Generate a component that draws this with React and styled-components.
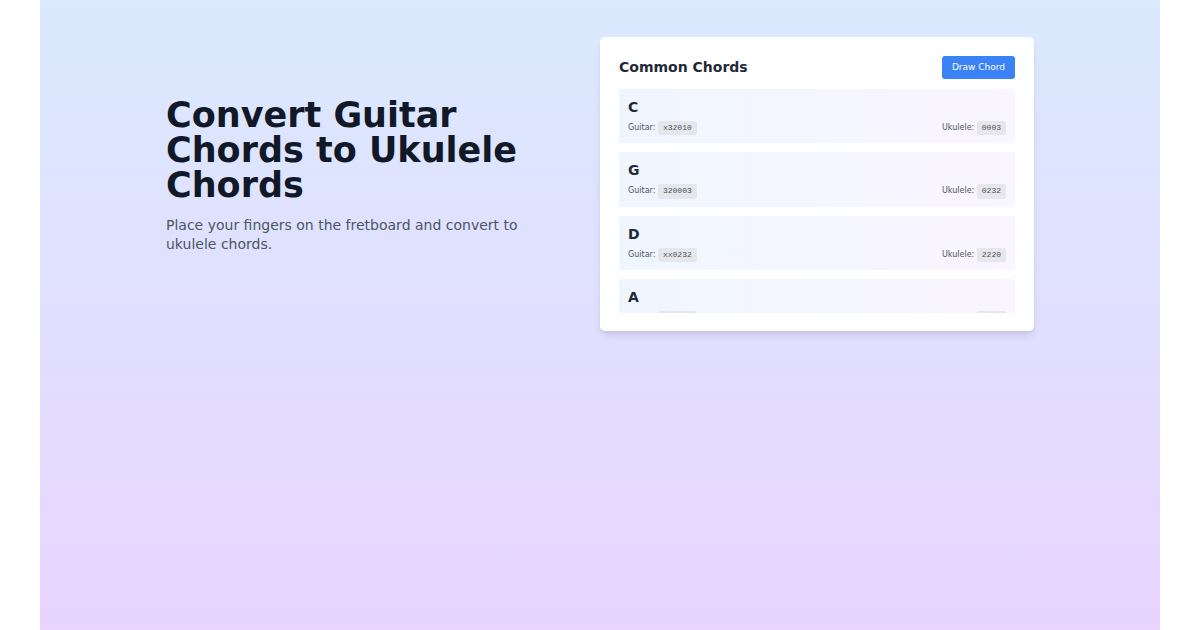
import React from "react";
import styled, { createGlobalStyle } from "styled-components";

const chords = [
  { name: "C", guitar: "x32010", ukulele: "0003" },
  { name: "G", guitar: "320003", ukulele: "0232" },
  { name: "D", guitar: "xx0232", ukulele: "2220" },
  { name: "A", guitar: "x02220", ukulele: "2100" },
];

function ChordItem({ name, guitar, ukulele }) {
  return (
    <Item>
      <ChordName>{name}</ChordName>
      <Fingerings>
        <span>
          Guitar: <Code>{guitar}</Code>
        </span>
        <span>
          Ukulele: <Code>{ukulele}</Code>
        </span>
      </Fingerings>
    </Item>
  );
}

function App() {
  return (
    <>
      <GlobalStyle />
      <Page>
        <Main>
          <Hero>
            <Title>Convert Guitar Chords to Ukulele Chords</Title>
            <Subtitle>
              Place your fingers on the fretboard and convert to ukulele chords.
            </Subtitle>
          </Hero>

          <Card>
            <CardHeader>
              <CardTitle>Common Chords</CardTitle>
              <DrawButton type="button">Draw Chord</DrawButton>
            </CardHeader>
            <ChordList>
              {chords.map((chord) => (
                <ChordItem key={chord.name} {...chord} />
              ))}
            </ChordList>
          </Card>
        </Main>
      </Page>
    </>
  );
}

export default App;

const GlobalStyle = createGlobalStyle`
  * {
    box-sizing: border-box;
  }

  body {
    margin: 0;
    background-color: #fff;
    font-family: "DejaVu Sans", sans-serif;
  }
`;

const Page = styled.div`
  min-height: 100vh;
  margin: 0 40px;
  background-image: linear-gradient(to bottom, #dbeafe, #e0e0ff 45%, #e9d5ff);
`;

const Main = styled.main`
  max-width: 896px;
  margin: 0 auto;
  padding: 37px 14px;
  display: grid;
  grid-template-columns: 1fr 1fr;
  align-items: start;
`;

const Hero = styled.section`
  padding: 61px 37px 0 0;
`;

const Title = styled.h1`
  margin: 0 0 13px;
  color: #111827;
  font-size: 35px;
  line-height: 35px;
  font-weight: 700;
`;

const Subtitle = styled.p`
  margin: 0;
  color: #4b5563;
  font-size: 14px;
  line-height: 19px;
`;

const Card = styled.section`
  padding: 19px 19px 18px;
  background-color: #fff;
  border-radius: 5px;
  box-shadow: 0 6px 9px -2px rgba(0, 0, 0, 0.1),
    0 2px 4px -2px rgba(0, 0, 0, 0.1);
`;

const CardHeader = styled.header`
  display: flex;
  justify-content: space-between;
  align-items: center;
  margin-bottom: 10px;
`;

const CardTitle = styled.h2`
  margin: 0;
  color: #1f2937;
  font-size: 14px;
  line-height: 19px;
  font-weight: 700;
`;

const DrawButton = styled.button`
  padding: 5px 10px;
  border: none;
  border-radius: 3px;
  background-color: #3b82f6;
  color: #fff;
  font-family: inherit;
  font-size: 9px;
  line-height: 13px;
  cursor: pointer;
`;

const ChordList = styled.ul`
  height: 224px;
  margin: 0;
  padding: 0;
  list-style: none;
  display: flex;
  flex-direction: column;
  gap: 9px;
  overflow-y: auto;
  scrollbar-width: none;
`;

const Item = styled.li`
  flex-shrink: 0;
  padding: 9px 9px 8px;
  border-radius: 3px;
  background-image: linear-gradient(to right, #eff6ff, #faf5ff);
`;

const ChordName = styled.h3`
  margin: 0 0 5px;
  color: #1f2937;
  font-size: 14px;
  line-height: 18px;
  font-weight: 700;
`;

const Fingerings = styled.div`
  display: flex;
  justify-content: space-between;
  color: #4b5563;
  font-size: 8px;
  line-height: 1.8;
`;

const Code = styled.code`
  display: inline-block;
  padding: 0 5px;
  border-radius: 2px;
  background-color: #e5e7eb;
  font-family: "Liberation Mono", monospace;
  font-size: 8px;
`;
